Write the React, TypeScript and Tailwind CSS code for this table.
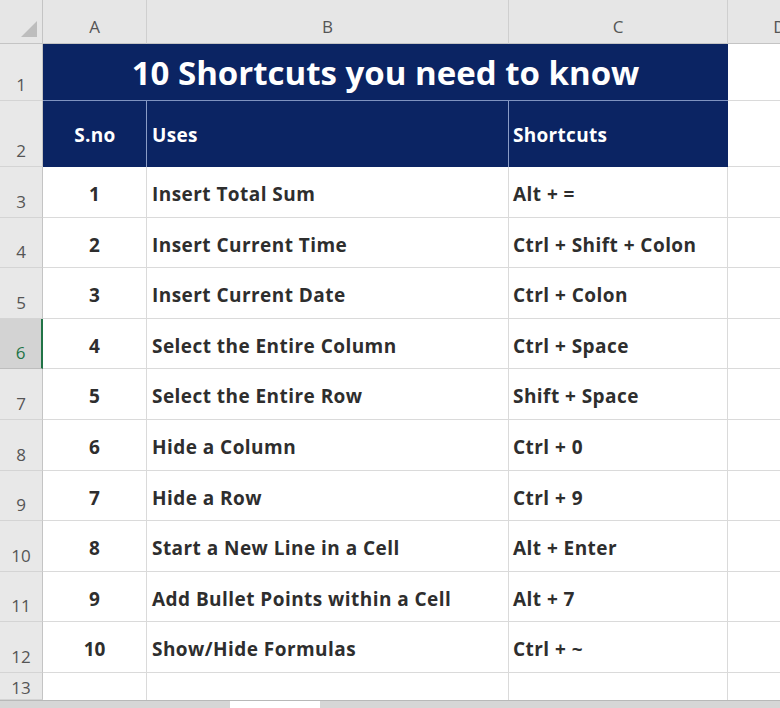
import React from "react";

const rows: [string, string, string][] = [
  ["1", "Insert Total Sum", "Alt + ="],
  ["2", "Insert Current Time", "Ctrl + Shift + Colon"],
  ["3", "Insert Current Date", "Ctrl + Colon"],
  ["4", "Select the Entire Column", "Ctrl + Space"],
  ["5", "Select the Entire Row", "Shift + Space"],
  ["6", "Hide a Column", "Ctrl + 0"],
  ["7", "Hide a Row", "Ctrl + 9"],
  ["8", "Start a New Line in a Cell", "Alt + Enter"],
  ["9", "Add Bullet Points within a Cell", "Alt + 7"],
  ["10", "Show/Hide Formulas", "Ctrl + ~"],
];

const hdrFont = { fontFamily: '"Open Sans", "Noto Sans", sans-serif' };
const cellFont = { fontFamily: '"Open Sans", "Noto Sans", sans-serif' };

function RowHead({ n, selected, last }: { n: string; selected?: boolean; last?: boolean }) {
  return (
    <div
      className={
        "flex justify-center items-end text-[17px] leading-none " +
        (last ? "pb-[3px] " : "pb-[7px] ") +
        (selected
          ? "bg-[#d3d3d3] text-[#217346] border-r-2 border-r-[#217346] border-b border-b-[#bdbdbd]"
          : "bg-[#e8e8e8] text-[#555555] border-r border-r-[#c4c4c4] border-b border-b-[#d4d4d4]")
      }
      style={hdrFont}
    >
      {n}
    </div>
  );
}

export default function App() {
  return (
    <div className="w-[780px] h-[708px] overflow-hidden bg-white flex flex-col">
      <div className="flex-1 overflow-hidden">
        <div className="grid grid-cols-[43px_104px_362px_219px_104px] grid-rows-[44px_57px_66px_repeat(10,50.6px)_27px] w-[832px]">
          {/* column header row */}
          <div className="bg-[#e6e6e6] border-r border-r-[#c4c4c4] border-b border-b-[#c4c4c4] flex items-end justify-end pr-[4px] pb-[5px]">
            <svg width="18" height="18" viewBox="0 0 18 18">
              <polygon points="17,1 17,17 1,17" fill="#bdbdbd" />
            </svg>
          </div>
          {["A", "B", "C", "D"].map((l) => (
            <div
              key={l}
              className="bg-[#e6e6e6] border-r border-r-[#cfcfcf] border-b border-b-[#c4c4c4] flex justify-center items-end pb-[8px] text-[17px] leading-none text-[#555555]"
              style={hdrFont}
            >
              {l}
            </div>
          ))}

          {/* row 1 */}
          <RowHead n="1" />
          <div
            className="col-span-3 bg-[#0b2463] border-b border-b-[#7f93c0] flex items-center justify-center text-white font-bold text-[33px] leading-none pt-[1px]"
            style={cellFont}
          >
            10 Shortcuts you need to know
          </div>
          <div className="border-r border-r-[#dadada] border-b border-b-[#dadada]" />

          {/* row 2 */}
          <RowHead n="2" />
          <div
            className="bg-[#0b2463] border-r border-r-[#8a9cc6] flex items-center justify-center text-white font-bold text-[19px] tracking-[0.3px] pt-[2px] pl-[1px]"
            style={cellFont}
          >
            S.no
          </div>
          <div
            className="bg-[#0b2463] border-r border-r-[#8a9cc6] flex items-center pl-[5px] text-white font-bold text-[19px] tracking-[0.3px] pt-[2px]"
            style={cellFont}
          >
            Uses
          </div>
          <div
            className="bg-[#0b2463] flex items-center pl-[4px] text-white font-bold text-[19px] tracking-[0.3px] pt-[2px]"
            style={cellFont}
          >
            Shortcuts
          </div>
          <div className="border-r border-r-[#dadada] border-b border-b-[#dadada]" />

          {/* data rows */}
          {rows.map(([n, use, sc], i) => (
            <React.Fragment key={n}>
              <RowHead n={String(i + 3)} selected={i + 3 === 6} />
              <div
                className="border-r border-r-[#dadada] border-b border-b-[#dadada] flex items-center justify-center pt-[5px] text-[19px] font-bold text-[#2e2e2e]"
                style={cellFont}
              >
                {n}
              </div>
              <div
                className="border-r border-r-[#dadada] border-b border-b-[#dadada] flex items-center pl-[5px] pt-[5px] text-[19px] tracking-[0.45px] font-bold text-[#2e2e2e]"
                style={cellFont}
              >
                {use}
              </div>
              <div
                className="border-r border-r-[#dadada] border-b border-b-[#dadada] flex items-center pl-[4px] pt-[5px] text-[19px] tracking-[0.45px] font-bold text-[#2e2e2e]"
                style={cellFont}
              >
                {sc}
              </div>
              <div className="border-r border-r-[#dadada] border-b border-b-[#dadada]" />
            </React.Fragment>
          ))}

          {/* row 13 */}
          <RowHead n="13" last />
          <div className="border-r border-r-[#dadada]" />
          <div className="border-r border-r-[#dadada]" />
          <div className="border-r border-r-[#dadada]" />
          <div className="border-r border-r-[#dadada]" />
        </div>
      </div>
      {/* sheet tab bar */}
      <div className="h-[8px] bg-[#d6d6d6] border-t border-t-[#b8b8b8] flex">
        <div className="w-[230px]" />
        <div className="w-[90px] bg-white" />
      </div>
    </div>
  );
}
